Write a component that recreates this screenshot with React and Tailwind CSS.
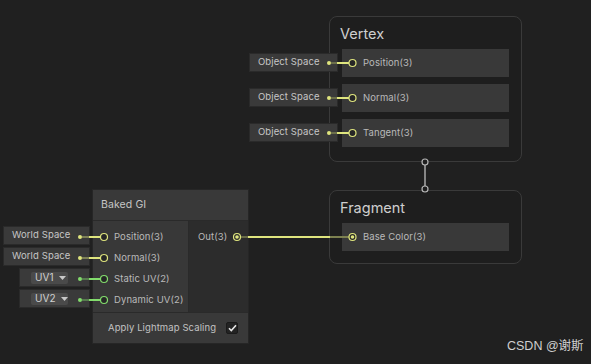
const YELLOW = '#dfe57e'
const GREEN = '#82dc6c'

const VERTEX_SLOTS = [
  { label: 'Position(3)', y: 63 },
  { label: 'Normal(3)', y: 98 },
  { label: 'Tangent(3)', y: 133 },
]

const BAKED_INPUTS = [
  { label: 'Position(3)', y: 237, color: YELLOW },
  { label: 'Normal(3)', y: 258, color: YELLOW },
  { label: 'Static UV(2)', y: 279, color: GREEN },
  { label: 'Dynamic UV(2)', y: 300, color: GREEN },
]

function Chip({ left, top, width, children }) {
  return (
    <div
      className="absolute h-[17px] bg-[#3a3a3a] flex items-center text-[9.5px] tracking-[0.1px] text-[#c6c6c6] shadow-[0_0_0_1px_#2a2a2a]"
      style={{ left, top, width }}
    >
      {children}
    </div>
  )
}

function Dropdown({ label }) {
  return (
    <div className="ml-[11px] w-[37px] h-[12px] rounded-[2px] bg-[#4a4a4a] flex items-center pl-[4px] gap-[5px] text-[10px] text-[#d0d0d0]">
      <span>{label}</span>
      <svg width="7" height="4" viewBox="0 0 7 4"><path d="M0 0h7L3.5 4z" fill="#c8c8c8" /></svg>
    </div>
  )
}

function Slot({ label }) {
  return (
    <div className="h-[28px] bg-[#393939] flex items-center pl-[21px] pt-[1px] text-[9.5px] tracking-[0.1px] text-[#bababa]">
      {label}
    </div>
  )
}

export default function App() {
  return (
    <div
      className="relative w-[591px] h-[364px] bg-[#202020] overflow-hidden"
      style={{ fontFamily: 'Inter, "Noto Sans", sans-serif' }}
    >
      {/* Vertex context */}
      <div className="absolute left-[329px] top-[16px] w-[193px] h-[146px] rounded-[8px] border border-[#3a3a3a] bg-[#1e1e1e] px-[12px] flex flex-col">
        <div className="mt-[7px] ml-[-2px] text-[14.5px] leading-[20px] text-[#cfcfcf]">Vertex</div>
        <div className="mt-[5px] flex flex-col gap-[7px]">
          {VERTEX_SLOTS.map((s) => (
            <Slot key={s.label} label={s.label} />
          ))}
        </div>
      </div>

      {/* Fragment context */}
      <div className="absolute left-[329px] top-[190px] w-[193px] h-[74px] rounded-[8px] border border-[#3a3a3a] bg-[#1e1e1e] px-[12px] flex flex-col">
        <div className="mt-[7px] ml-[-2px] text-[14.5px] leading-[20px] text-[#cfcfcf]">Fragment</div>
        <div className="mt-[5px]">
          <Slot label="Base Color(3)" />
        </div>
      </div>

      {/* Object space chips */}
      {VERTEX_SLOTS.map((s) => (
        <Chip key={s.label} left={250} top={s.y - 9} width={87}>
          <span className="pl-[8px]">Object Space</span>
        </Chip>
      ))}

      {/* Baked GI chips */}
      <Chip left={4} top={227} width={85}>
        <span className="pl-[8px]">World Space</span>
      </Chip>
      <Chip left={4} top={248} width={85}>
        <span className="pl-[8px]">World Space</span>
      </Chip>
      <Chip left={20} top={269} width={69}>
        <Dropdown label="UV1" />
      </Chip>
      <Chip left={20} top={290} width={69}>
        <Dropdown label="UV2" />
      </Chip>

      {/* Baked GI node */}
      <div className="absolute left-[93px] top-[190px] w-[155px] h-[153px] bg-[#393939] flex flex-col shadow-[0_0_0_1px_#262626]">
        <div className="h-[31px] flex items-center pl-[8px] text-[10.5px] tracking-[0.1px] text-[#c6c6c6] border-b border-[#2a2a2a]">Baked GI</div>
        <div className="h-[91px] flex">
          <div className="w-[96px] bg-[#383838] pt-[6px] flex flex-col border-r border-[#2a2a2a]">
            {BAKED_INPUTS.map((p) => (
              <div key={p.label} className="h-[21px] flex items-center pl-[21px] text-[9.5px] tracking-[0.1px] text-[#bababa]">
                {p.label}
              </div>
            ))}
          </div>
          <div className="flex-1 bg-[#2c2c2c] pt-[6px]">
            <div className="h-[21px] flex items-center pl-[9px] text-[9.5px] tracking-[0.1px] text-[#bababa]">Out(3)</div>
          </div>
        </div>
        <div className="flex-1 flex items-center pl-[15px] pr-[10px] border-t border-[#2a2a2a] text-[9.5px] tracking-[0.1px] text-[#c2c2c2]">
          <span>Apply Lightmap Scaling</span>
          <div className="ml-auto w-[12px] h-[12px] rounded-[2px] bg-[#232323] border border-[#1a1a1a] flex items-center justify-center">
            <svg width="9" height="8" viewBox="0 0 9 8">
              <path d="M1 4.2l2.3 2.3L8 1.2" fill="none" stroke="#e6e6e6" strokeWidth="1.6" />
            </svg>
          </div>
        </div>
      </div>

      {/* Wires and ports */}
      <svg className="absolute inset-0 pointer-events-none" width="591" height="364">
        {VERTEX_SLOTS.map((s) => (
          <g key={s.label}>
            <line x1="331" y1={s.y} x2="337" y2={s.y} stroke="#7d8150" strokeWidth="1.5" />
            <line x1="337" y1={s.y} x2="349" y2={s.y} stroke={YELLOW} strokeWidth="2" />
            <circle cx="329" cy={s.y} r="2" fill={YELLOW} />
            <circle cx="352.5" cy={s.y} r="3.5" fill="#262626" stroke={YELLOW} strokeWidth="1.2" />
          </g>
        ))}
        {BAKED_INPUTS.map((p) => (
          <g key={p.label}>
            <line x1="82" y1={p.y} x2="89" y2={p.y} stroke={p.color} strokeOpacity="0.55" strokeWidth="1.5" />
            <line x1="89" y1={p.y} x2="101" y2={p.y} stroke={p.color} strokeWidth="2" />
            <circle cx="80" cy={p.y} r="2" fill={p.color} />
            <circle cx="104" cy={p.y} r="3.5" fill="#262626" stroke={p.color} strokeWidth="1.2" />
          </g>
        ))}

        {/* Out -> Base Color */}
        <line x1="241" y1="237" x2="248" y2="237" stroke="#7d8150" strokeWidth="1.5" />
        <line x1="248" y1="237" x2="330" y2="237" stroke={YELLOW} strokeWidth="2" />
        <line x1="330" y1="237" x2="349" y2="237" stroke="#7d8150" strokeWidth="2" />
        <circle cx="237" cy="237" r="3.5" fill="#2c2c2c" stroke={YELLOW} strokeWidth="1.2" />
        <circle cx="237" cy="237" r="1.8" fill={YELLOW} />
        <circle cx="352.5" cy="237" r="3.5" fill="#262626" stroke={YELLOW} strokeWidth="1.2" />
        <circle cx="352.5" cy="237" r="1.8" fill={YELLOW} />

        {/* Vertex -> Fragment flow */}
        <line x1="425" y1="165" x2="425" y2="186" stroke="#a8a8a8" strokeWidth="1.5" />
        <circle cx="425" cy="162" r="3" fill="#1e1e1e" stroke="#b5b5b5" strokeWidth="1.2" />
        <circle cx="425" cy="189" r="3" fill="#1e1e1e" stroke="#b5b5b5" strokeWidth="1.2" />
      </svg>

      <div
        className="absolute left-[507px] top-[339px] text-[12.5px] leading-[15px] text-[#cfcfcf]"
        style={{ fontFamily: '"Liberation Sans", "Noto Sans CJK SC", sans-serif' }}
      >
        CSDN @谢斯
      </div>
    </div>
  )
}
